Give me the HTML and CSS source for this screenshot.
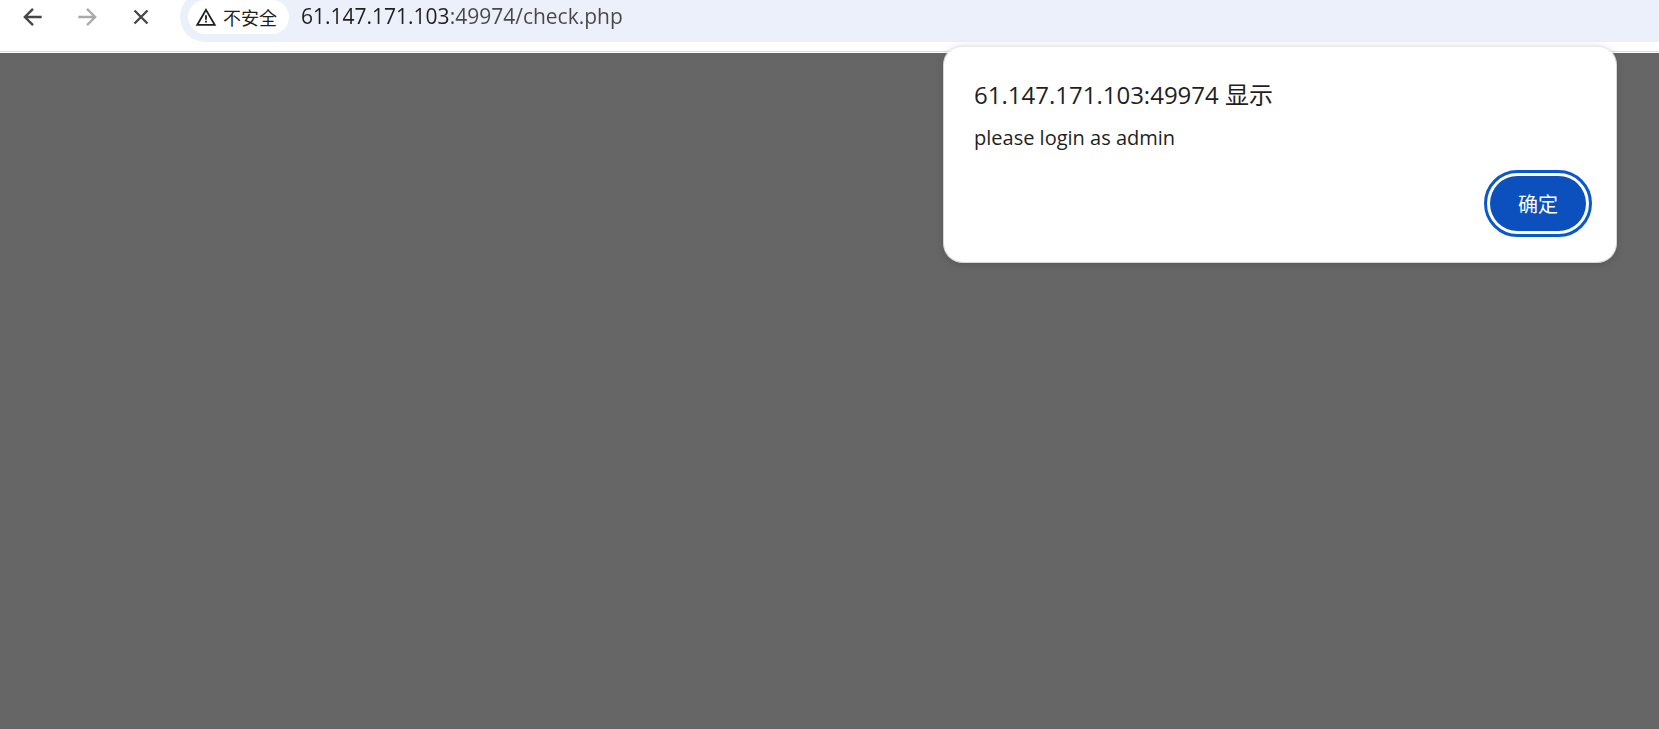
FILE: index.html
```
<!DOCTYPE html>
<html lang="zh-CN">
<head>
    <meta charset="UTF-8">
    <meta name="viewport" content="width=device-width, initial-scale=1.0">
    <title>61.147.171.103:49974/check.php</title>
    <link rel="stylesheet" href="styles.css">
</head>
<body>
    <header class="toolbar">
        <nav class="nav-buttons">
            <button type="button" class="icon-button" aria-label="后退">
                <svg viewBox="0 0 24 24"><path d="M20 12H5M12 4.500L4.500 12L12 19.500"/></svg>
            </button>
            <button type="button" class="icon-button" aria-label="前进" disabled>
                <svg viewBox="0 0 24 24"><path d="M4 12H19M12 4.500L19.500 12L12 19.500"/></svg>
            </button>
            <button type="button" class="icon-button" aria-label="停止">
                <svg viewBox="0 0 24 24"><path d="M6 6L18 18M18 6L6 18"/></svg>
            </button>
        </nav>
        <div class="address-bar">
            <button type="button" class="security-chip">
                <svg viewBox="0 0 24 24"><path d="M12 4.200L21.500 20.500H2.500Z"/><path d="M12 10V15M12 16V18"/></svg>
                <span>不安全</span>
            </button>
            <input type="text" class="url" aria-label="地址" value="61.147.171.103:49974/check.php" spellcheck="false">
        </div>
    </header>

    <main class="page"></main>

    <div class="dialog" role="alertdialog" aria-labelledby="dialog-title" aria-describedby="dialog-message">
        <h1 id="dialog-title">61.147.171.103:49974 显示</h1>
        <p id="dialog-message">please login as admin</p>
        <div class="dialog-actions">
            <button type="button" class="confirm">确定</button>
        </div>
    </div>
</body>
</html>
```
FILE: styles.css
```
* {
    box-sizing: border-box;
}

body {
    margin: 0;
    min-height: 100vh;
    display: flex;
    flex-direction: column;
    font-family: "Open Sans", "Noto Sans CJK SC", sans-serif;
    color: #1f1f1f;
    background-color: #fff;
}

button {
    border: none;
    font-family: inherit;
    cursor: pointer;
}

/* toolbar */
.toolbar {
    height: 52px;
    padding: 0 0 9px 20px;
    display: flex;
    align-items: flex-end;
    overflow: hidden;
    background-color: #fff;
    border-bottom: 1px solid #dadde0;
}

.nav-buttons {
    height: 50px;
    display: flex;
    align-items: center;
    gap: 28px;
}

.icon-button {
    width: 26px;
    height: 26px;
    padding: 0;
    background: none;
    color: #474747;
}

.icon-button:disabled {
    color: #ababab;
    cursor: default;
}

.icon-button svg {
    display: block;
    width: 26px;
    height: 26px;
    fill: none;
    stroke: currentColor;
    stroke-width: 2.2;
}

.address-bar {
    flex: 1;
    height: 50px;
    margin-left: 26px;
    padding-left: 8px;
    display: flex;
    align-items: center;
    gap: 12px;
    background-color: #ecf0fa;
    border-radius: 25px 0 0 25px;
}

.security-chip {
    height: 34px;
    padding: 0 12px 0 7px;
    display: flex;
    align-items: center;
    gap: 6px;
    border-radius: 17px;
    background-color: #fff;
    color: #1f1f1f;
    font-size: 18px;
    white-space: nowrap;
}

.security-chip svg {
    width: 22px;
    height: 22px;
    fill: none;
    stroke: currentColor;
    stroke-width: 2;
}

/* the host is darker than the port and path */
.url {
    flex: 1;
    min-width: 0;
    padding: 0 0 2px;
    border: none;
    outline: none;
    font-family: inherit;
    font-size: 21px;
    color: transparent;
    caret-color: #1f1f1f;
    background: linear-gradient(to right, #1f1f1f 148px, #474747 148px);
    -webkit-background-clip: text;
    background-clip: text;
}

.page {
    flex: 1;
    margin-top: 1px;
    background-color: #666;
}

/* alert */
.dialog {
    position: absolute;
    top: 45px;
    right: 42px;
    width: 674px;
    max-width: 90%;
    padding: 31px 30px;
    border: 1px solid #d5d7d7;
    border-top: 2px solid #ebeced;
    border-radius: 20px;
    background-color: #fff;
    box-shadow: 0 2px 8px rgba(0, 0, 0, 0.15);
}

.dialog h1 {
    margin: 0;
    font-size: 24px;
    font-weight: normal;
    line-height: 34px;
}

.dialog p {
    margin: 11px 0 23px;
    font-size: 20px;
    line-height: 30px;
}

.dialog-actions {
    display: flex;
    justify-content: flex-end;
}

.confirm {
    width: 96px;
    height: 55px;
    border-radius: 28px;
    background-color: #0b50bd;
    color: #fff;
    font-size: 20px;
    outline: 3px solid #0b57d0;
    outline-offset: 3px;
}
```
